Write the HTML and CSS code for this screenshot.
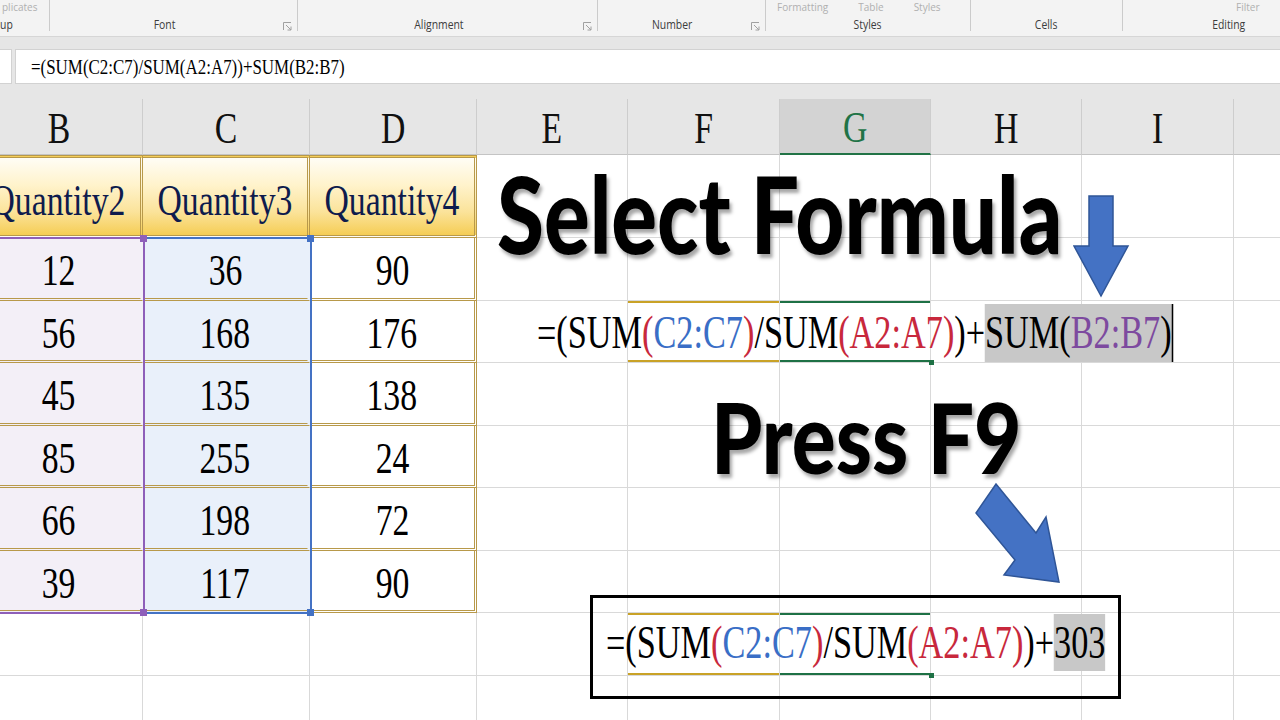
FILE: index.html
```html
<!DOCTYPE html>
<html>
<head>
<meta charset="utf-8">
<link rel="stylesheet" href="styles.css">
</head>
<body>
<div class="app">
  <div class="ribbon">
    <div class="group g0">
      <div class="top first-top"><span>plicates</span></div>
      <div class="lrow"><span class="lbl left"><span class="sq">up</span></span></div>
    </div>
    <div class="group g1">
      <div class="top"></div>
      <div class="lrow"><span class="lbl"><span class="sq">Font</span></span><span class="launch"><svg width="9" height="9" viewBox="0 0 9 9"><path d="M0.5 8V0.5H8" fill="none" stroke="#a0a0a0"/><path d="M3 3L8 8M8 4.5V8H4.5" fill="none" stroke="#a0a0a0"/></svg></span></div>
    </div>
    <div class="group g2">
      <div class="top"></div>
      <div class="lrow"><span class="lbl"><span class="sq">Alignment</span></span><span class="launch"><svg width="9" height="9" viewBox="0 0 9 9"><path d="M0.5 8V0.5H8" fill="none" stroke="#a0a0a0"/><path d="M3 3L8 8M8 4.5V8H4.5" fill="none" stroke="#a0a0a0"/></svg></span></div>
    </div>
    <div class="group g3">
      <div class="top"></div>
      <div class="lrow"><span class="lbl"><span class="sq">Number</span></span><span class="launch"><svg width="9" height="9" viewBox="0 0 9 9"><path d="M0.5 8V0.5H8" fill="none" stroke="#a0a0a0"/><path d="M3 3L8 8M8 4.5V8H4.5" fill="none" stroke="#a0a0a0"/></svg></span></div>
    </div>
    <div class="group g4">
      <div class="top styles-top"><span>Formatting</span><span>Table</span><span>Styles</span></div>
      <div class="lrow"><span class="lbl"><span class="sq">Styles</span></span></div>
    </div>
    <div class="group g5">
      <div class="top"></div>
      <div class="lrow"><span class="lbl"><span class="sq">Cells</span></span></div>
    </div>
    <div class="group g6">
      <div class="top edit-top"><span>Filter</span></div>
      <div class="lrow"><span class="lbl"><span class="sq">Editing</span></span></div>
    </div>
  </div>

  <div class="fwrap">
    <div class="fbar">
      <div class="namebox"></div>
      <div class="formula"><span class="ftext">=(SUM(C2:C7)/SUM(A2:A7))+SUM(B2:B7)</span></div>
    </div>
  </div>

  <div class="sheet">
    <div class="ch"><span class="t">B</span></div>
    <div class="ch"><span class="t">C</span></div>
    <div class="ch"><span class="t">D</span></div>
    <div class="ch"><span class="t">E</span></div>
    <div class="ch"><span class="t">F</span></div>
    <div class="ch sel"><span class="t">G</span></div>
    <div class="ch"><span class="t">H</span></div>
    <div class="ch"><span class="t">I</span></div>
    <div class="ch"></div>

    <div class="qh"><span class="t">Quantity2</span></div>
    <div class="qh"><span class="t">Quantity3</span></div>
    <div class="qh"><span class="t">Quantity4</span></div>
    <div class="c"></div><div class="c"></div><div class="c"></div><div class="c"></div><div class="c"></div><div class="c"></div>

    <div class="d cb"><span class="t">12</span></div>
    <div class="d cc"><span class="t">36</span></div>
    <div class="d cd"><span class="t">90</span></div>
    <div class="c"></div><div class="c"></div><div class="c"></div><div class="c"></div><div class="c"></div><div class="c"></div>

    <div class="d cb"><span class="t">56</span></div>
    <div class="d cc"><span class="t">168</span></div>
    <div class="d cd"><span class="t">176</span></div>
    <div class="c"></div><div class="c gold"></div><div class="c green"><i class="gh"></i></div><div class="c"></div><div class="c"></div><div class="c"></div>

    <div class="d cb"><span class="t">45</span></div>
    <div class="d cc"><span class="t">135</span></div>
    <div class="d cd"><span class="t">138</span></div>
    <div class="c"></div><div class="c"></div><div class="c"></div><div class="c"></div><div class="c"></div><div class="c"></div>

    <div class="d cb"><span class="t">85</span></div>
    <div class="d cc"><span class="t">255</span></div>
    <div class="d cd"><span class="t">24</span></div>
    <div class="c"></div><div class="c"></div><div class="c"></div><div class="c"></div><div class="c"></div><div class="c"></div>

    <div class="d cb"><span class="t">66</span></div>
    <div class="d cc"><span class="t">198</span></div>
    <div class="d cd"><span class="t">72</span></div>
    <div class="c"></div><div class="c"></div><div class="c"></div><div class="c"></div><div class="c"></div><div class="c"></div>

    <div class="d cb"><span class="t">39</span></div>
    <div class="d cc"><span class="t">117</span></div>
    <div class="d cd"><span class="t">90</span></div>
    <div class="c"></div><div class="c"></div><div class="c"></div><div class="c"></div><div class="c"></div><div class="c"></div>

    <div class="c"></div><div class="c"></div><div class="c"></div>
    <div class="c"></div><div class="c gold"></div><div class="c green"><i class="gh"></i></div><div class="c"></div><div class="c"></div><div class="c"></div>

    <div class="c"></div><div class="c"></div><div class="c"></div>
    <div class="c"></div><div class="c"></div><div class="c"></div><div class="c"></div><div class="c"></div><div class="c"></div>
  </div>

  <div class="range range-c"><i class="hd tr"></i><i class="hd br"></i></div>
  <div class="range range-b"><i class="hd tr"></i><i class="hd br"></i></div>

  <div class="big big-select">Select Formula</div>
  <div class="big big-press">Press F9</div>

  <svg class="arrow-down" width="60" height="106" viewBox="0 0 60 106">
    <path d="M16 2H40V52H55L28 102L1 52H16Z" fill="#4472c4" stroke="#2f5597" stroke-width="1.5" stroke-linejoin="miter"/>
  </svg>

  <svg class="arrow-diag" width="110" height="115" viewBox="0 0 110 115">
    <path d="M36 9L76 58L86 42L99 107L44 100L55 85L16 38Z" fill="#4472c4" stroke="#2f5597" stroke-width="1.5"/>
  </svg>

  <div class="fx fx-top"><span class="k">=(SUM</span><span class="r">(</span><span class="b">C2:C7</span><span class="r">)</span><span class="k">/SUM</span><span class="r">(A2:A7)</span><span class="k">)+</span><span class="hl"><span class="k">SUM(</span><span class="p">B2:B7</span><span class="k">)</span></span></div>

  <div class="rbox">
    <div class="fx fx-box"><span class="k">=(SUM</span><span class="r">(</span><span class="b">C2:C7</span><span class="r">)</span><span class="k">/SUM</span><span class="r">(A2:A7)</span><span class="k">)+</span><span class="hl2"><span class="k">303</span></span></div>
  </div>
</div>
</body>
</html>
```

FILE: styles.css
```css
* { box-sizing: border-box; }
body {
  margin: 0;
  width: 1280px;
  height: 720px;
  overflow: hidden;
  background: #ffffff;
  font-family: "Liberation Serif", "Times New Roman", serif;
}
.app {
  position: relative;
  width: 1280px;
  height: 720px;
  overflow: hidden;
  background: #e6e6e6;
}

/* ribbon */
.ribbon {
  height: 37px;
  background: #f3f3f3;
  border-bottom: 1px solid #d6d6d6;
  display: flex;
  font-family: "Open Sans", "Noto Sans", sans-serif;
}
.group {
  flex: none;
  height: 31px;
  border-right: 1px solid #cbcbcb;
  display: flex;
  flex-direction: column;
  justify-content: space-between;
}
.g0 { width: 50px; }
.g1 { width: 248px; }
.g2 { width: 300px; }
.g3 { width: 168px; }
.g4 { width: 205px; }
.g5 { width: 152px; }
.g6 { width: 212px; border-right: none; }
.top {
  height: 14px;
  font-size: 10px;
  line-height: 14px;
  color: #b0b0b0;
  display: flex;
  white-space: nowrap;
}
.first-top { padding-left: 2px; }
.styles-top { padding-left: 11px; gap: 30px; }
.edit-top { padding-left: 113px; }
.lrow {
  display: flex;
  align-items: center;
  height: 18px;
  margin-bottom: -2px;
}
.lbl {
  flex: 1;
  text-align: center;
  font-size: 13px;
  line-height: 18px;
  color: #3c3c3c;
  white-space: nowrap;
}
.lbl.left { text-align: left; }
.sq {
  display: inline-block;
  transform: scaleX(0.8);
}
.lbl.left .sq { transform-origin: left center; }
.launch {
  width: 9px;
  height: 9px;
  margin: 4px 5px 0 4px;
  display: flex;
}

/* formula bar */
.fwrap {
  height: 62px;
  padding: 12px 0 15px 0;
}
.fbar {
  display: flex;
  height: 35px;
  gap: 3px;
}
.namebox {
  width: 12px;
  background: #ffffff;
  border: 1px solid #d2d2d2;
  border-left: none;
}
.formula {
  flex: 1;
  background: #ffffff;
  border: 1px solid #d2d2d2;
  border-right: none;
  padding-left: 15px;
  font-size: 22px;
  line-height: 33px;
  white-space: nowrap;
  overflow: hidden;
}
.ftext {
  display: inline-block;
  transform: scaleX(0.77);
  transform-origin: left center;
}

/* sheet */
.sheet {
  display: grid;
  grid-template-columns: 167px 167px 167px 151px 152px 151px 151px 152px 120px;
  grid-template-rows: 56px 83px repeat(8, 62.5px);
  margin-left: -24px;
  width: 1328px;
  background: #ffffff;
}
.t {
  display: inline-block;
  transform: scaleX(0.75);
  white-space: nowrap;
}
.ch {
  background: #e6e6e6;
  border-right: 1px solid #cdcdcd;
  border-bottom: 1px solid #c4c4c4;
  display: flex;
  align-items: center;
  justify-content: center;
  font-size: 45px;
  color: #111111;
  padding-top: 2px;
}
.ch.sel {
  background: #d3d3d3;
  color: #217346;
  border-bottom: 2px solid #217346;
}
.c {
  position: relative;
  border-right: 1px solid #d9d9d9;
  border-bottom: 1px solid #d9d9d9;
}
.qh {
  background: linear-gradient(to bottom, #fffdf5 0%, #fff3cc 35%, #fbe39a 70%, #f5cd55 100%);
  border-top: 3px double #b8994a;
  border-right: 3px double #b8994a;
  border-bottom: 3px double #b8994a;
  display: flex;
  align-items: center;
  justify-content: center;
  font-size: 45px;
  color: #0e1b4d;
  padding-top: 6px;
}
.d {
  display: flex;
  align-items: center;
  justify-content: center;
  font-size: 45px;
  color: #000000;
  border-right: 3px double #b8994a;
  border-bottom: 3px double #b8994a;
  padding-top: 5px;
}
.cb { background: #f3eff7; border-right-color: transparent; }
.cc { background: #e9f0fa; border-right-color: transparent; }
.cd { background: #ffffff; }
.gold { box-shadow: inset 0 2px 0 #c9a227, inset 0 -2px 0 #c9a227; }
.green { box-shadow: inset 0 2px 0 #1e7145, inset 0 -2px 0 #1e7145; }
.gh {
  position: absolute;
  right: -4px;
  bottom: -3px;
  width: 5px;
  height: 5px;
  background: #1e7145;
  z-index: 2;
}

/* selected ranges */
.range {
  position: absolute;
  top: 237px;
  height: 377px;
}
.range-b {
  left: -20px;
  width: 165px;
  border: 2px solid #8e5fb9;
}
.range-c {
  left: 143px;
  width: 169px;
  border: 2px solid #4472c4;
}
.hd {
  position: absolute;
  width: 7px;
  height: 7px;
}
.range-b .hd { background: #8e5fb9; }
.range-c .hd { background: #4472c4; }
.hd.tr { right: -4px; top: -4px; }
.hd.br { right: -4px; bottom: -4px; }

/* overlay captions */
.big {
  position: absolute;
  font-family: Lato, "Open Sans", sans-serif;
  font-weight: 900;
  line-height: 1;
  color: #000000;
  white-space: nowrap;
  text-shadow: 3px 4px 4px rgba(0, 0, 0, 0.35);
  transform-origin: left top;
}
.big-select {
  left: 497px;
  top: 160px;
  font-size: 106px;
  transform: scaleX(0.805);
}
.big-press {
  left: 711px;
  top: 388px;
  font-size: 97px;
  transform: scaleX(0.845);
}

.arrow-down {
  position: absolute;
  left: 1073px;
  top: 194px;
}
.arrow-diag {
  position: absolute;
  left: 960px;
  top: 475px;
}

/* formula overlays */
.fx {
  position: absolute;
  font-size: 46px;
  white-space: nowrap;
  transform: scaleX(0.745);
  transform-origin: left center;
}
.fx-top {
  left: 537px;
  top: 304px;
  line-height: 58px;
  height: 58px;
}
.k { color: #000000; }
.r { color: #c8283c; }
.b { color: #3a6ec6; }
.p { color: #7d4a9f; }
.hl {
  display: inline-block;
  background: #c8c8c8;
  height: 58px;
  line-height: 58px;
  border-right: 2px solid #000000;
}
.rbox {
  position: absolute;
  left: 590px;
  top: 595px;
  width: 531px;
  height: 104px;
  border: 3px solid #000000;
}
.fx-box {
  left: 13px;
  top: 16px;
  line-height: 57px;
  height: 57px;
}
.hl2 {
  display: inline-block;
  background: #c8c8c8;
  height: 57px;
  line-height: 57px;
}
```
